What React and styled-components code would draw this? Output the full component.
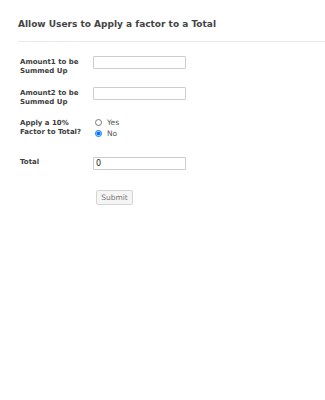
import React from 'react'
import styled, { createGlobalStyle } from 'styled-components'

const Global = createGlobalStyle`
  body {
    margin: 0;
    background: #fff;
    font-family: "DejaVu Sans", Verdana, sans-serif;
    color: #333;
  }
`

const Wrapper = styled.section`
  width: 325px;
  padding: 17px 0 0 18px;
  box-sizing: border-box;
`

const Title = styled.h1`
  margin: 0;
  font-size: 9px;
  font-weight: bold;
  color: #444;
  line-height: 14px;
`

const Divider = styled.div`
  height: 1px;
  background: #eaeaea;
  margin: 10px 0 14px 0;
`

const Row = styled.div`
  display: flex;
  align-items: flex-start;
  padding-left: 2px;
  height: ${p => p.h || 31}px;
`

const Label = styled.label`
  width: 73px;
  font-size: 7px;
  font-weight: bold;
  line-height: 9px;
  color: #3d3d3d;
  padding-top: ${p => p.top ?? 2}px;
`

const Input = styled.input`
  width: 93px;
  height: 13px;
  box-sizing: border-box;
  border: 1px solid #ccc;
  border-radius: 1px;
  padding: 0 2px;
  font-family: "DejaVu Sans", Verdana, sans-serif;
  font-size: 8px;
  color: #222;
  margin: 0;
`

const Options = styled.div`
  display: flex;
  flex-direction: column;
`

const Option = styled.label`
  display: flex;
  align-items: center;
  font-size: 7.5px;
  color: #555;
  height: 11px;

  input {
    width: 7px;
    height: 7px;
    margin: 0 5px 0 2px;
  }
`

const Submit = styled.button`
  display: block;
  margin-left: 78px;
  width: 37px;
  height: 15px;
  padding: 0;
  font-family: "DejaVu Sans", Verdana, sans-serif;
  font-size: 7.5px;
  color: #777;
  background: #f5f5f5;
  border: 1px solid #d4d4d4;
  border-radius: 2px;
`

export default function App() {
  return (
    <Wrapper>
      <Global />
      <Title>Allow Users to Apply a factor to a Total</Title>
      <Divider />
      <Row h={31}>
        <Label>Amount1 to be<br />Summed Up</Label>
        <Input type="text" />
      </Row>
      <Row h={30}>
        <Label>Amount2 to be<br />Summed Up</Label>
        <Input type="text" />
      </Row>
      <Row h={40}>
        <Label>Apply a 10%<br />Factor to Total?</Label>
        <Options>
          <Option><input type="radio" name="f" />Yes</Option>
          <Option><input type="radio" name="f" defaultChecked />No</Option>
        </Options>
      </Row>
      <Row h={33}>
        <Label top={1}>Total</Label>
        <Input type="text" defaultValue="0" />
      </Row>
      <Submit type="button">Submit</Submit>
    </Wrapper>
  )
}
